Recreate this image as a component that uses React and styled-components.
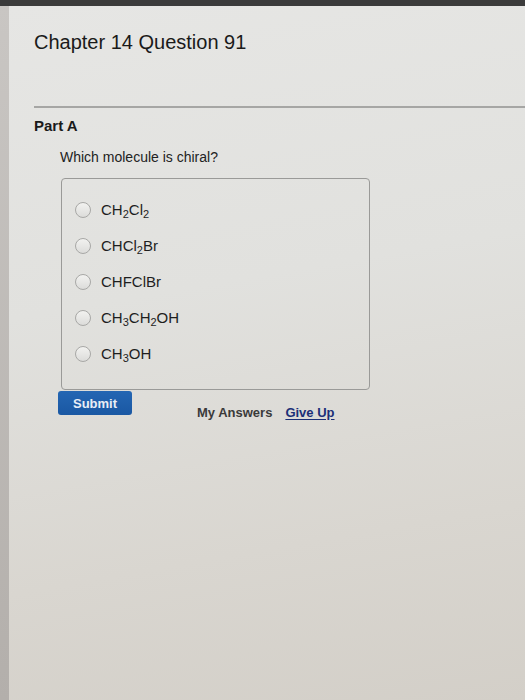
import React from "react";
import styled, { createGlobalStyle } from "styled-components";

const GlobalStyle = createGlobalStyle`
    html, body {
        margin: 0;
        padding: 0;
    }
    body {
        background: #a9a6a2;
        font-family: "Liberation Sans", Arial, Helvetica, sans-serif;
    }
`;

const Screen = styled.div`
    width: 525px;
    height: 700px;
    display: flex;
    flex-direction: column;
    overflow: hidden;
`;

const TopBar = styled.div`
    height: 6px;
    background: #3b3b3b;
    flex-shrink: 0;
`;

const Frame = styled.div`
    flex: 1;
    display: flex;
`;

const Edge = styled.div`
    width: 9px;
    background: linear-gradient(180deg, #c9c6c3 0%, #b3afab 100%);
`;

const Page = styled.div`
    flex: 1;
    background: linear-gradient(170deg, #e6e6e4 0%, #e1e1de 40%, #d9d6d0 75%, #d3cfc8 100%);
    padding: 21px 0 0 25px;
    color: #1e1e1e;
`;

const Title = styled.h1`
    margin: 0;
    font-size: 20px;
    font-weight: normal;
    line-height: 30px;
    color: #1a1a1a;
`;

const Divider = styled.hr`
    margin: 49px 0 0 0;
    border: 0;
    border-top: 2px solid #a6a6a4;
`;

const PartTitle = styled.h2`
    margin: 9px 0 0 0;
    font-size: 15px;
    font-weight: bold;
    line-height: 18px;
    color: #1a1a1a;
`;

const Prompt = styled.p`
    margin: 13px 0 0 26px;
    font-size: 14px;
    line-height: 18px;
    color: #222;
`;

const Answers = styled.div`
    margin: 12px 0 0 27px;
    width: 309px;
    height: 212px;
    box-sizing: border-box;
    border: 1.5px solid #9a9a98;
    border-radius: 4px;
    padding: 21px 0 0 13px;
    display: flex;
    flex-direction: column;
    gap: 17px;
`;

const Option = styled.label`
    display: flex;
    align-items: center;
    gap: 10px;
    font-size: 15px;
    line-height: 19px;
    color: #1e1e1e;
`;

const Radio = styled.span`
    width: 14px;
    height: 14px;
    border-radius: 50%;
    border: 1px solid #a8a8a6;
    background: linear-gradient(180deg, #f2f2f0 0%, #dcdcda 100%);
    flex-shrink: 0;
`;

const Sub = styled.sub`
    font-size: 11px;
    line-height: 0;
    vertical-align: -3px;
`;

const Actions = styled.div`
    margin: 1px 0 0 24px;
    display: flex;
    align-items: flex-start;
`;

const SubmitButton = styled.button`
    width: 74px;
    height: 24px;
    border: 0;
    border-radius: 3px;
    background: linear-gradient(180deg, #2466b3 0%, #1a58a3 100%);
    color: #e9eef6;
    font-family: inherit;
    font-size: 13px;
    font-weight: bold;
    padding: 0;
`;

const LinkGroup = styled.div`
    margin: 14px 0 0 65px;
    display: flex;
    gap: 13px;
    font-size: 13px;
    font-weight: bold;
`;

const PlainLink = styled.span`
    color: #3a3a3a;
`;

const GiveUp = styled.span`
    color: #1b2f77;
    text-decoration: underline;
    text-underline-offset: 2px;
`;

const options = [
    ["CH", <Sub key="a">2</Sub>, "Cl", <Sub key="b">2</Sub>],
    ["CHCl", <Sub key="a">2</Sub>, "Br"],
    ["CHFClBr"],
    ["CH", <Sub key="a">3</Sub>, "CH", <Sub key="b">2</Sub>, "OH"],
    ["CH", <Sub key="a">3</Sub>, "OH"],
];

const App = () => {
    return (
        <>
            <GlobalStyle />
            <Screen>
                <TopBar />
                <Frame>
                    <Edge />
                    <Page>
                        <Title>Chapter 14 Question 91</Title>
                        <Divider />
                        <PartTitle>Part A</PartTitle>
                        <Prompt>Which molecule is chiral?</Prompt>
                        <Answers>
                            {options.map((parts, i) => (
                                <Option key={i}>
                                    <Radio />
                                    <span>{parts}</span>
                                </Option>
                            ))}
                        </Answers>
                        <Actions>
                            <SubmitButton>Submit</SubmitButton>
                            <LinkGroup>
                                <PlainLink>My Answers</PlainLink>
                                <GiveUp>Give Up</GiveUp>
                            </LinkGroup>
                        </Actions>
                    </Page>
                </Frame>
            </Screen>
        </>
    );
};

export default App;
